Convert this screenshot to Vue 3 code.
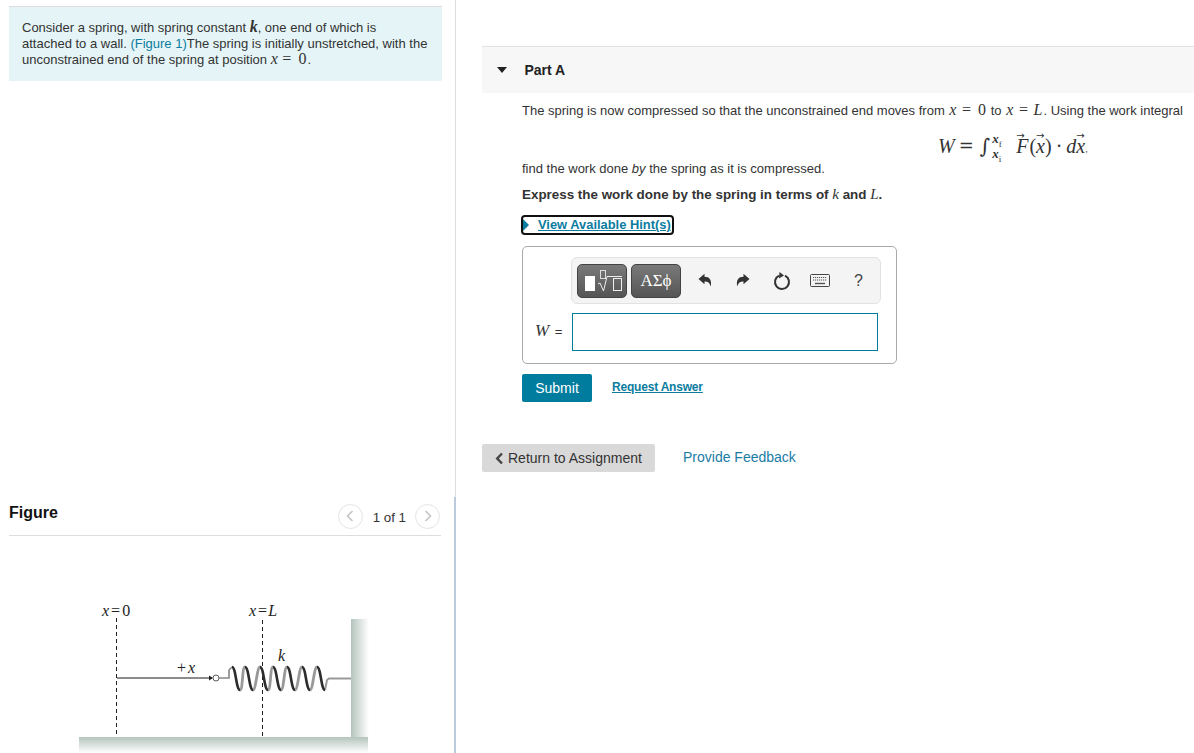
<template>
  <div class="page">
    <div class="left">
      <section class="intro-pane">
        <div class="intro">
          Consider a spring, with spring constant <b class="math">k</b>, one end of which is attached to a wall.
          <a class="fig-link">(Figure 1)</a>The spring is initially unstretched, with the unconstrained end of the spring at position
          <span class="math">x</span> <span class="num">= 0</span>.
        </div>
      </section>
      <section class="figure-pane">
        <div class="figure-head">
          <h2>Figure</h2>
          <div class="pager">
            <span class="page-btn">
              <svg width="8" height="12" viewBox="0 0 8 12"><path d="M6.5 1 L1.5 6 L6.5 11" /></svg>
            </span>
            <span class="page-count">1 of 1</span>
            <span class="page-btn">
              <svg width="8" height="12" viewBox="0 0 8 12"><path d="M1.5 1 L6.5 6 L1.5 11" /></svg>
            </span>
          </div>
        </div>
        <svg class="diagram" width="290" height="153" viewBox="79 600 290 153">
          <defs>
            <linearGradient id="wallShade" x1="0" x2="1" y1="0" y2="0">
              <stop offset="0" stop-color="#b4c4bd" />
              <stop offset="1" stop-color="#ffffff" />
            </linearGradient>
            <linearGradient id="floorShade" x1="0" x2="0" y1="0" y2="1">
              <stop offset="0" stop-color="#b4c4bd" />
              <stop offset="1" stop-color="#ffffff" />
            </linearGradient>
          </defs>
          <rect x="351" y="619" width="18" height="118" fill="url(#wallShade)" />
          <rect x="79" y="737" width="289" height="16" fill="url(#floorShade)" />
          <line x1="116.5" y1="618" x2="116.5" y2="737" class="dash" />
          <line x1="262.5" y1="620" x2="262.5" y2="737" class="dash" />
          <line x1="117" y1="678" x2="212" y2="678" stroke="#666" stroke-width="1.4" />
          <path d="M209 675.5 L213 678 L209 680.5 Z" fill="#222" />
          <circle cx="216" cy="678" r="3" fill="#fff" stroke="#333" stroke-width="0.8" />
          <path d="M219 678 H229 V670 L232 667" fill="none" stroke="#888" stroke-width="1.6" />
          <path d="M325 690 L327 680 L329 678.5 H351" fill="none" stroke="#999" stroke-width="2" />
          <path v-for="c in coils" :key="'u' + c.x" :d="c.up" fill="none" stroke="#999" stroke-width="2.8" />
          <path v-for="c in coils" :key="'d' + c.x" :d="c.down" fill="none" stroke="#2c2c2c" stroke-width="2.6" />
          <text x="102" y="616" class="label"><tspan font-style="italic">x</tspan><tspan dx="2">=</tspan><tspan dx="2">0</tspan></text>
          <text x="249" y="616" class="label"><tspan font-style="italic">x</tspan><tspan dx="2">=</tspan><tspan dx="1" font-style="italic">L</tspan></text>
          <text x="177" y="673" class="label">+<tspan dx="2" font-style="italic">x</tspan></text>
          <text x="278" y="661" class="label" font-style="italic">k</text>
        </svg>
      </section>
    </div>

    <main class="right">
      <header class="part-head">
        <span class="caret"></span>
        <span class="part-title">Part A</span>
      </header>

      <div class="part-body">
        <p class="line-one">
          The spring is now compressed so that the unconstrained end moves from
          <span class="math">x</span> <span class="num">= 0</span> to
          <span class="math">x</span> <span class="num">=</span> <span class="math">L</span>. Using the work integral
        </p>
        <div class="equation">
          <span class="math big">W</span><span class="num big eq">=</span>
          <span class="integral">∫</span>
          <span class="limits"><span class="math">x</span><sub>f</sub><br><span class="math">x</span><sub>i</sub></span>
          <span class="vec math big f">F</span><span class="num big">(</span><span class="vec math big">x</span><span class="num big">)</span>
          <span class="num big dot">·</span>
          <span class="math big">d</span><span class="vec math big">x</span><span class="comma">,</span>
        </div>
        <p class="find">find the work done <i>by</i> the spring as it is compressed.</p>
        <p class="express">Express the work done by the spring in terms of <span class="math plain">k</span> and <span class="math plain">L</span>.</p>

        <a class="hints"><span class="hint-arrow"></span>View Available Hint(s)</a>

        <div class="answer">
          <div class="toolbar">
            <button class="tool-btn">
              <svg width="50" height="34" viewBox="0 0 50 34">
                <rect x="8" y="12" width="10" height="15" fill="#fff" />
                <rect x="23.5" y="6.5" width="5" height="8" fill="none" stroke="#ddd" />
                <path d="M21 20 L23 19 L26.5 27 L30 12.5 H45" fill="none" stroke="#eee" />
                <rect x="36.5" y="14.5" width="8" height="12" fill="none" stroke="#eee" />
              </svg>
            </button>
            <button class="tool-btn greek">ΑΣϕ</button>
            <div class="tool-icons">
              <svg class="undo" width="14" height="15" viewBox="0 0 14 15"><path d="M0.5 6 L6.5 0.8 V3.8 C11.5 3.8 14 7 12.8 13.5 C11.5 9.5 10 8.4 6.5 8.4 V11.2 Z" fill="#333" /></svg>
              <svg class="redo" width="14" height="15" viewBox="0 0 14 15"><path d="M13.5 6 L7.5 0.8 V3.8 C2.5 3.8 0 7 1.2 13.5 C2.5 9.5 4 8.4 7.5 8.4 V11.2 Z" fill="#333" /></svg>
              <svg class="reset" width="18" height="18" viewBox="0 0 18 18">
                <path d="M6 3.6 A7 7 0 1 0 12 3.6" fill="none" stroke="#333" stroke-width="2" />
                <path d="M6.5 0 L11 3.6 L6 6.5 Z" fill="#333" />
              </svg>
              <svg class="keys" width="20" height="13" viewBox="0 0 20 13">
                <rect x="0.5" y="0.5" width="19" height="12" rx="1" fill="#f4f4f4" stroke="#444" />
                <path d="M3 3.5 H17 M3 6 H17" stroke="#555" stroke-width="1.2" stroke-dasharray="1.2 0.8" />
                <path d="M5 9.5 H15" stroke="#555" stroke-width="1.4" />
              </svg>
              <span class="help">?</span>
            </div>
          </div>
          <div class="answer-row">
            <label><span class="math">W</span> =</label>
            <input class="answer-input" type="text" />
          </div>
        </div>

        <div class="actions">
          <button class="submit">Submit</button>
          <a class="request">Request Answer</a>
        </div>
      </div>

      <footer class="nav-row">
        <button class="back">
          <svg width="9" height="13" viewBox="0 0 9 13"><path d="M7 1.5 L2.2 6.5 L7 11.5" /></svg>
          Return to Assignment
        </button>
        <a class="feedback">Provide Feedback</a>
      </footer>
    </main>
  </div>
</template>

<script setup>
const peaks = [232, 245, 260, 273, 287, 302, 317]
const coils = peaks.map((x, i) => {
  const next = peaks[i + 1]
  return {
    x,
    down: `M${x} 667 C${x + 4} 667 ${x + 4} 690 ${x + 8} 690`,
    up: next ? `M${x + 8} 690 C${x + 11} 690 ${next - 3} 667 ${next} 667` : ''
  }
})
</script>

<style>
html, body {
  margin: 0;
  background: #fff;
  overflow: hidden;
}
</style>

<style scoped>
.page {
  display: flex;
  width: 1194px;
  height: 753px;
  overflow: hidden;
  font-family: "Liberation Sans", Arial, sans-serif;
  font-size: 13px;
  line-height: 16px;
  color: #333;
}

.math {
  font-family: "Liberation Serif", serif;
  font-style: italic;
  font-size: 16px;
  line-height: 0;
}
.num {
  font-family: "Liberation Serif", serif;
  font-size: 16px;
  line-height: 0;
  word-spacing: 3px;
  margin: 0 1px;
}

/* left column */
.left {
  width: 456px;
  flex-shrink: 0;
}
.intro-pane {
  height: 497px;
  box-sizing: border-box;
  padding: 6px 13px 0 9px;
  border-right: 1px solid #ddd;
}
.intro {
  background: #e5f5f7;
  border-top: 1px solid #ddd;
  padding: 13px 13px 13px 13px;
}
.fig-link {
  color: #0b7c9f;
}
.figure-pane {
  height: 256px;
  box-sizing: border-box;
  padding: 0 13px 0 9px;
  border-right: 2px solid #bccbdb;
}
.figure-head {
  display: flex;
  justify-content: space-between;
  height: 39px;
  box-sizing: border-box;
  border-bottom: 1px solid #ddd;
}
.figure-head h2 {
  margin: 7px 0 0;
  font-size: 16px;
  line-height: 18px;
  font-weight: bold;
  color: #111;
}
.pager {
  display: flex;
  align-items: center;
  padding-top: 4px;
  height: 30px;
  margin-right: 1px;
}
.page-btn {
  display: flex;
  align-items: center;
  justify-content: center;
  width: 23px;
  height: 23px;
  border: 1px solid #e4e4e4;
  border-radius: 50%;
}
.page-btn path {
  fill: none;
  stroke: #c4c4c4;
  stroke-width: 1.6;
}
.page-count {
  margin: 3px 9px 0 10px;
  font-size: 13.33px;
}
.diagram {
  display: block;
  margin: 64px 0 0 70px;
}
.dash {
  stroke: #222;
  stroke-width: 1;
  stroke-dasharray: 4 3;
}
.label {
  font-family: "Liberation Serif", serif;
  font-size: 16px;
  fill: #222;
}

/* right column */
.right {
  margin-left: 26px;
  flex: 1;
  min-width: 0;
}
.part-head {
  display: flex;
  align-items: center;
  margin-top: 46px;
  height: 47px;
  box-sizing: border-box;
  border-top: 1px solid #e2e2e2;
  background: #f7f7f7;
  padding-left: 15px;
}
.caret {
  width: 0;
  height: 0;
  border-left: 5px solid transparent;
  border-right: 5px solid transparent;
  border-top: 6px solid #222;
}
.part-title {
  margin-left: 17.5px;
  font-size: 14px;
  font-weight: bold;
  color: #222;
}
.part-body {
  padding: 10px 0 0 40px;
}
.part-body p {
  margin: 0;
  white-space: nowrap;
}
.line-one .math {
  margin: 0 1px;
}
.equation {
  display: flex;
  align-items: center;
  box-sizing: border-box;
  height: 40px;
  padding-top: 14px;
  margin: 0 0 0 416px;
  white-space: nowrap;
}
.big {
  font-size: 20px;
  line-height: 30px;
  margin: 0;
}
.eq {
  font-family: "DejaVu Serif", serif;
  font-size: 18px;
  margin: 0 6px 0 4px;
}
.integral {
  font-family: "DejaVu Serif", serif;
  font-size: 20px;
  line-height: 30px;
}
.limits {
  line-height: 15px;
  margin: 0 5px 0 2px;
  width: 19px;
}
.limits .math {
  font-size: 13px;
  font-weight: bold;
  line-height: 15px;
}
.limits sub {
  font-family: "Liberation Serif", serif;
  font-size: 9px;
  line-height: 0;
}
.vec {
  position: relative;
}
.vec::before {
  content: "→";
  position: absolute;
  left: 0;
  top: 0;
  font-family: "DejaVu Sans", sans-serif;
  font-size: 10px;
  font-style: normal;
  line-height: 10px;
}
.f {
  margin-right: 1px;
}
.dot {
  margin: 0 4px;
}
.comma {
  font-size: 9px;
  margin-top: 6px;
}
.find {
  margin-top: 2px !important;
}
.express {
  margin-top: 10px !important;
  font-weight: bold;
  font-size: 13.4px;
}
.express .plain {
  font-weight: normal;
  font-size: 15px;
}
.hints {
  display: inline-flex;
  align-items: center;
  box-sizing: border-box;
  width: 153px;
  height: 20px;
  margin: 12px 0 0 -1px;
  border: 2px solid #111;
  border-radius: 4px;
  color: #0b7c9f;
  font-size: 12.9px;
  font-weight: bold;
  text-decoration: underline;
  white-space: nowrap;
}
.hint-arrow {
  width: 0;
  height: 0;
  border-top: 6px solid transparent;
  border-bottom: 6px solid transparent;
  border-left: 6px solid #0b7c9f;
  margin-right: 9px;
}
.answer {
  box-sizing: border-box;
  width: 375px;
  height: 118px;
  margin-top: 11px;
  border: 1px solid #aaa;
  border-radius: 5px;
  padding: 10px 18px 0 11px;
}
.toolbar {
  display: flex;
  align-items: center;
  box-sizing: border-box;
  width: 310px;
  height: 47px;
  margin-left: 37px;
  padding-left: 5px;
  background: #f4f4f4;
  border: 1px solid #e2e2e2;
  border-radius: 6px;
}
.tool-btn {
  width: 50px;
  height: 34px;
  padding: 0;
  margin-right: 4px;
  box-sizing: border-box;
  border: 1px solid #444;
  border-radius: 5px;
  background: linear-gradient(#7a7a7a, #555);
  overflow: hidden;
}
.tool-btn svg {
  display: block;
  margin: -1px;
}
.greek {
  font-family: "Liberation Serif", serif;
  font-size: 17px;
  color: #fff;
}
.tool-icons {
  display: flex;
  align-items: center;
  flex: 1;
  padding-left: 13px;
}
.redo {
  margin-left: 24px;
}
.reset {
  margin-left: 23px;
}
.keys {
  margin-left: 19px;
}
.help {
  margin-left: 24px;
  font-size: 16px;
  color: #444;
}
.answer-row {
  display: flex;
  align-items: center;
  margin-top: 9px;
}
.answer-row label {
  width: 38px;
  flex-shrink: 0;
  padding-left: 1px;
  box-sizing: border-box;
  white-space: nowrap;
}
.answer-row .math {
  font-size: 17px;
  margin-right: 2px;
}
.answer-input {
  box-sizing: border-box;
  width: 306px;
  height: 38px;
  border: 1px solid #007c9e;
  outline: none;
  background: #fff;
}
.actions {
  display: flex;
  align-items: center;
  margin-top: 10px;
}
.submit {
  width: 70px;
  height: 28px;
  padding: 0;
  border: none;
  border-radius: 2px;
  background: #007c9e;
  color: #fff;
  font-family: inherit;
  font-size: 14px;
}
.request {
  margin: -3px 0 0 20px;
  color: #0b7c9f;
  font-size: 12px;
  letter-spacing: -0.2px;
  font-weight: bold;
  text-decoration: underline;
}
.nav-row {
  display: flex;
  align-items: center;
  margin-top: 42px;
}
.back {
  display: flex;
  align-items: center;
  gap: 4px;
  width: 173px;
  height: 28px;
  padding: 0 0 0 13px;
  border: none;
  border-radius: 2px;
  background: #d9d9d9;
  color: #333;
  font-family: inherit;
  font-size: 14px;
}
.back path {
  fill: none;
  stroke: #444;
  stroke-width: 2.4;
}
.feedback {
  margin: -2px 0 0 28px;
  font-size: 14px;
  color: #1a7ca5;
}
</style>
